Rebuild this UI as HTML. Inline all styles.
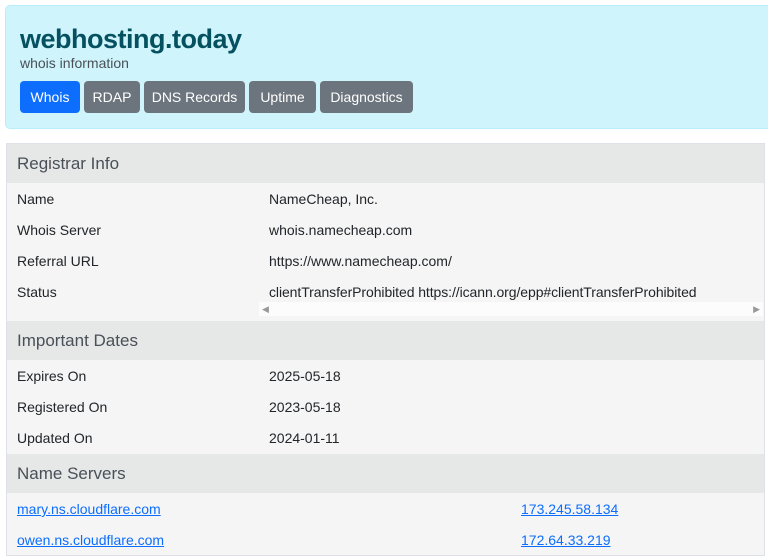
<!DOCTYPE html>
<html><head><style>
body{margin:0;background:#fff;font-family:"Liberation Sans",sans-serif;font-size:14px;color:#212529;width:768px;height:557px;overflow:hidden;position:relative}
.j{position:absolute;left:5px;top:5px;width:775px;height:122px;background:#cff4fc;border:1px solid #b6effb;border-radius:5px}
h1{position:absolute;left:14px;top:18px;margin:0;font-size:27px;font-weight:bold;color:#055160;letter-spacing:-0.5px}
.sub{position:absolute;left:14px;top:49px;font-size:14px;color:#495057}
.btn{position:absolute;top:75px;height:32px;line-height:32px;border-radius:4px;background:#6c757d;color:#fff;font-size:14px;text-align:center}
.t{position:absolute;left:6px;top:143px;width:757px;height:411px;border:1px solid #dee2e6;background:#f5f5f5}
.h{position:absolute;left:0;width:757px;height:39px;background:#e6e7e7;font-size:17px;color:#495057;line-height:40px;text-indent:10px}
.r{position:absolute;left:0;width:757px;height:31px;line-height:31px}
.r span{position:absolute;left:10px}
.r b{position:absolute;left:262px;font-weight:normal}
a{color:#0d6efd;text-decoration:underline}
</style></head><body>
<div class="j">
<h1>webhosting.today</h1>
<div class="sub">whois information</div>
<div class="btn" style="left:14px;width:60px;background:#0d6efd">Whois</div>
<div class="btn" style="left:78px;width:56px">RDAP</div>
<div class="btn" style="left:138px;width:101px">DNS Records</div>
<div class="btn" style="left:243px;width:67px">Uptime</div>
<div class="btn" style="left:314px;width:93px">Diagnostics</div>
</div>
<div class="t">
<div class="h" style="top:0">Registrar Info</div>
<div class="r" style="top:40px"><span>Name</span><b>NameCheap, Inc.</b></div>
<div class="r" style="top:71px"><span>Whois Server</span><b>whois.namecheap.com</b></div>
<div class="r" style="top:102px"><span>Referral URL</span><b>https://www.namecheap.com/</b></div>
<div class="r" style="top:133px"><span>Status</span><b style="letter-spacing:-0.08px">clientTransferProhibited https://icann.org/epp#clientTransferProhibited</b></div>
<div style="position:absolute;left:252px;top:158px;width:504px;height:14px;background:#fcfcfc;font-size:9px;color:#999;line-height:14px"><span style="position:absolute;left:3px">◀</span><span style="position:absolute;right:3px">▶</span></div>
<div class="h" style="top:177px">Important Dates</div>
<div class="r" style="top:217px"><span>Expires On</span><b>2025-05-18</b></div>
<div class="r" style="top:248px"><span>Registered On</span><b>2023-05-18</b></div>
<div class="r" style="top:279px"><span>Updated On</span><b>2024-01-11</b></div>
<div class="h" style="top:310px">Name Servers</div>
<div class="r" style="top:350px"><span><a>mary.ns.cloudflare.com</a></span><b style="left:514px"><a>173.245.58.134</a></b></div>
<div class="r" style="top:381px"><span><a>owen.ns.cloudflare.com</a></span><b style="left:514px"><a>172.64.33.219</a></b></div>
</div>
</body></html>
